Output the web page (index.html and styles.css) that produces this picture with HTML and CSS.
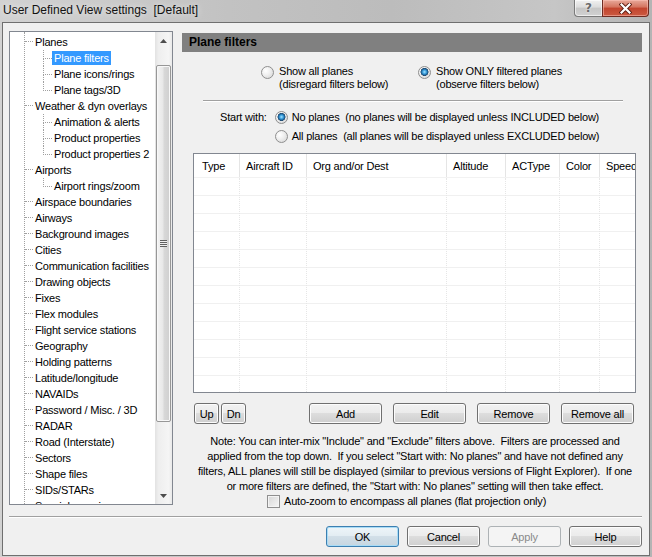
FILE: index.html
```html
<!DOCTYPE html>
<html lang="en">
  <head>
    <meta charset="UTF-8">
    <meta name="viewport" content="width=device-width, initial-scale=1.0">
    <title>User Defined View settings</title>
    <link rel="stylesheet" href="styles.css">
  </head>
  <body>
    <div class="window">
      <div class="titlebar">
        <span class="title">User Defined View settings&nbsp; [Default]</span>
        <div class="caption">
          <span class="cap cap-help">?</span>
          <span class="cap cap-close">
            <svg width="13" height="11" viewBox="0 0 13 11">
              <path d="M2.5 1.5 L10.5 9.5 M10.5 1.5 L2.5 9.5" stroke="#5a1d12" stroke-width="4" stroke-linecap="square"/>
              <path d="M2.5 1.5 L10.5 9.5 M10.5 1.5 L2.5 9.5" stroke="#ffffff" stroke-width="2.2" stroke-linecap="square"/>
            </svg>
          </span>
        </div>
      </div>

      <div class="client">
        <div class="main">
          <!-- left tree -->
          <div class="tree">
            <div class="tree-items">
              <ul class="tree-root">
                <li>
                  <div class="row"><span class="branch"></span><span class="label">Planes</span></div>
                  <ul class="tree-sub">
                    <li class="row"><span class="branch"></span><span class="label selected">Plane filters</span></li>
                    <li class="row"><span class="branch"></span><span class="label">Plane icons/rings</span></li>
                    <li class="row last"><span class="branch"></span><span class="label">Plane tags/3D</span></li>
                  </ul>
                </li>
                <li>
                  <div class="row"><span class="branch"></span><span class="label">Weather &amp; dyn overlays</span></div>
                  <ul class="tree-sub">
                    <li class="row"><span class="branch"></span><span class="label">Animation &amp; alerts</span></li>
                    <li class="row"><span class="branch"></span><span class="label">Product properties</span></li>
                    <li class="row last"><span class="branch"></span><span class="label">Product properties 2</span></li>
                  </ul>
                </li>
                <li>
                  <div class="row"><span class="branch"></span><span class="label">Airports</span></div>
                  <ul class="tree-sub">
                    <li class="row last"><span class="branch"></span><span class="label">Airport rings/zoom</span></li>
                  </ul>
                </li>
                <li class="row"><span class="branch"></span><span class="label">Airspace boundaries</span></li>
                <li class="row"><span class="branch"></span><span class="label">Airways</span></li>
                <li class="row"><span class="branch"></span><span class="label">Background images</span></li>
                <li class="row"><span class="branch"></span><span class="label">Cities</span></li>
                <li class="row"><span class="branch"></span><span class="label">Communication facilities</span></li>
                <li class="row"><span class="branch"></span><span class="label">Drawing objects</span></li>
                <li class="row"><span class="branch"></span><span class="label">Fixes</span></li>
                <li class="row"><span class="branch"></span><span class="label">Flex modules</span></li>
                <li class="row"><span class="branch"></span><span class="label">Flight service stations</span></li>
                <li class="row"><span class="branch"></span><span class="label">Geography</span></li>
                <li class="row"><span class="branch"></span><span class="label">Holding patterns</span></li>
                <li class="row"><span class="branch"></span><span class="label">Latitude/longitude</span></li>
                <li class="row"><span class="branch"></span><span class="label">NAVAIDs</span></li>
                <li class="row"><span class="branch"></span><span class="label">Password / Misc. / 3D</span></li>
                <li class="row"><span class="branch"></span><span class="label">RADAR</span></li>
                <li class="row"><span class="branch"></span><span class="label">Road (Interstate)</span></li>
                <li class="row"><span class="branch"></span><span class="label">Sectors</span></li>
                <li class="row"><span class="branch"></span><span class="label">Shape files</span></li>
                <li class="row"><span class="branch"></span><span class="label">SIDs/STARs</span></li>
                <li class="row"><span class="branch"></span><span class="label">Special use airspace</span></li>
              </ul>
            </div>
            <div class="vscroll">
              <div class="sb-btn">
                <svg width="7" height="4" viewBox="0 0 7 4"><path d="M0 4 L3.5 0 L7 4 Z" fill="#4d4d4d"/></svg>
              </div>
              <div class="sb-track">
                <div class="sb-thumb">
                  <span class="grip"></span>
                </div>
              </div>
              <div class="sb-btn">
                <svg width="7" height="4" viewBox="0 0 7 4"><path d="M0 0 L7 0 L3.5 4 Z" fill="#4d4d4d"/></svg>
              </div>
            </div>
          </div>

          <!-- right panel -->
          <div class="panel">
            <div class="panel-head">Plane filters</div>

            <div class="show-row">
              <div class="opt opt-all">
                <span class="radio"></span>
                <span>Show all planes<br>(disregard filters below)</span>
              </div>
              <div class="opt">
                <span class="radio checked"></span>
                <span>Show ONLY filtered planes<br>(observe filters below)</span>
              </div>
            </div>

            <div class="sep sep-short"></div>

            <div class="start-with">
              <span class="start-label">Start with:</span>
              <div class="opt opt-line">
                <span class="radio checked"></span>
                <span>No planes&nbsp; (no planes will be displayed unless INCLUDED below)</span>
              </div>
              <span></span>
              <div class="opt opt-line">
                <span class="radio"></span>
                <span>All planes&nbsp; (all planes will be displayed unless EXCLUDED below)</span>
              </div>
            </div>

            <div class="listview">
              <div class="lv-head">
                <span>Type</span>
                <span>Aircraft ID</span>
                <span>Org and/or Dest</span>
                <span>Altitude</span>
                <span>ACType</span>
                <span>Color</span>
                <span>Speed</span>
              </div>
              <div class="lv-body">
                <span></span><span></span><span></span><span></span><span></span><span></span><span></span>
              </div>
            </div>

            <div class="list-buttons">
              <button class="btn btn-small">Up</button>
              <button class="btn btn-small">Dn</button>
              <button class="btn btn-add">Add</button>
              <button class="btn">Edit</button>
              <button class="btn">Remove</button>
              <button class="btn">Remove all</button>
            </div>

            <p class="note">
              Note: You can inter-mix "Include" and "Exclude" filters above.&nbsp; Filters are processed and<br>
              applied from the top down.&nbsp; If you select "Start with: No planes" and have not defined any<br>
              filters, ALL planes will still be displayed (similar to previous versions of Flight Explorer).&nbsp; If one<br>
              or more filters are defined, the "Start with: No planes" setting will then take effect.
            </p>

            <label class="autozoom">
              <span class="checkbox"></span>
              <span>Auto-zoom to encompass all planes (flat projection only)</span>
            </label>
          </div>
        </div>

        <div class="sep footer-sep"></div>

        <div class="dlg-buttons">
          <button class="btn btn-default">OK</button>
          <button class="btn">Cancel</button>
          <button class="btn" disabled>Apply</button>
          <button class="btn">Help</button>
        </div>
      </div>
    </div>
  </body>
</html>
```

FILE: styles.css
```css
body{
  margin: 0;
  background: #ffffff;
  font-family: "Liberation Sans", Arial, sans-serif;
  font-size: 11px;
  letter-spacing: -0.2px;
  color: #000000;
}
.window{
  width: 652px;
  height: 557px;
  box-sizing: border-box;
  padding: 0 2px 1px 2px;
  display: flex;
  flex-direction: column;
  background: linear-gradient(to right, #d2d2d2, #c2c2c2 35%, #bcbcbc 60%, #c6c6c6 85%, #b4b4b4);
}

/* title bar */
.titlebar{
  height: 22px;
  display: flex;
  align-items: flex-start;
}
.title{
  padding: 3px 0 0 1px;
  font-size: 12px;
  line-height: 15px;
  color: #111111;
  letter-spacing: 0;
  text-shadow: 0 0 6px rgba(255, 255, 255, 0.8);
  white-space: nowrap;
}
.caption{
  margin-left: auto;
  margin-right: 1px;
  display: flex;
}
.cap{
  height: 17px;
  box-sizing: border-box;
  display: flex;
  align-items: center;
  justify-content: center;
}
.cap-help{
  width: 28px;
  border: 1px solid #7a7a7a;
  border-top: none;
  border-right: none;
  border-radius: 0 0 0 4px;
  background: linear-gradient(#f1f1f1, #dcdcdc 45%, #c6c6c6 50%, #d2d2d2);
  box-shadow: inset 0 0 0 1px rgba(255, 255, 255, 0.6);
  font-family: "DejaVu Sans", sans-serif;
  font-weight: bold;
  font-size: 12px;
  color: #6a6a6a;
  text-shadow: 0 0 2px #ffffff;
}
.cap-close{
  width: 47px;
  border: 1px solid #6e2c22;
  border-top: none;
  border-radius: 0 0 4px 0;
  background: linear-gradient(#e8a99a, #d4735e 45%, #c2442d 50%, #cb5a41);
  box-shadow: inset 0 0 0 1px rgba(255, 200, 190, 0.5);
}

/* client area */
.client{
  flex: 1;
  box-sizing: border-box;
  border: 1px solid #6f6f6f;
  background: #f0f0f0;
  padding: 8px 7px 0 6px;
  display: flex;
  flex-direction: column;
}
.main{
  height: 474px;
  display: flex;
  gap: 9px;
  align-items: flex-start;
}

/* tree */
.tree{
  width: 164px;
  height: 474px;
  box-sizing: border-box;
  border: 1px solid #828790;
  background: #ffffff;
  display: flex;
}
.tree-items{
  flex: 1;
  overflow: hidden;
}
.tree-root,
.tree-sub{
  list-style: none;
  margin: 0;
  padding: 0;
}
.tree-root{
  margin-left: 14px;
  padding-top: 2px;
  min-height: 100%;
  box-sizing: border-box;
  border-left: 1px dotted #a0a0a0;
}
.row{
  height: 16px;
  display: flex;
  white-space: nowrap;
}
.branch{
  width: 8px;
  height: 8px;
  flex: none;
  box-sizing: border-box;
  border-bottom: 1px dotted #a0a0a0;
}
.tree-sub{
  margin-left: 18px;
}
.tree-sub .branch{
  width: 9px;
  height: 16px;
  border: none;
  display: flex;
  flex-direction: column;
}
.tree-sub .branch::before{
  content: "";
  height: 9px;
  box-sizing: border-box;
  border-left: 1px dotted #a0a0a0;
  border-bottom: 1px dotted #a0a0a0;
}
.tree-sub .branch::after{
  content: "";
  flex: 1;
  border-left: 1px dotted #a0a0a0;
}
.tree-sub .last .branch::after{
  border-left: none;
}
.label{
  margin-top: 1px;
  height: 14px;
  line-height: 14px;
  padding: 0 2px;
}
.label.selected{
  background: #3399ff;
  color: #ffffff;
}

/* tree scrollbar */
.vscroll{
  width: 17px;
  display: flex;
  flex-direction: column;
  background: linear-gradient(to right, #e2e2e2, #eeeeee 20%, #f5f5f5 80%, #e9e9e9);
}
.sb-btn{
  height: 17px;
  display: flex;
  align-items: center;
  justify-content: center;
}
.sb-track{
  flex: 1;
}
.sb-thumb{
  margin: 16px 1px 0 1px;
  height: 357px;
  box-sizing: border-box;
  border: 1px solid #979797;
  border-radius: 2px;
  background: linear-gradient(to right, #f4f4f4, #e8e8e8 45%, #d8d8d8 55%, #cfcfcf);
  box-shadow: inset 0 0 0 1px #f8f8f8;
  display: flex;
  align-items: center;
  justify-content: center;
}
.grip{
  width: 7px;
  height: 7px;
  background: repeating-linear-gradient(to bottom, #606060 0 1px, #eeeeee 1px 2px);
}

/* right panel */
.panel{
  width: 460px;
  flex: none;
}
.panel-head{
  margin-top: 2px;
  height: 19px;
  line-height: 19px;
  padding-left: 7px;
  background: #808080;
  font-size: 12px;
  font-weight: bold;
  letter-spacing: 0;
  color: #000000;
}
.show-row{
  margin-top: 13px;
  padding-left: 79px;
  display: flex;
}
.opt{
  display: flex;
  align-items: flex-start;
  gap: 5px;
  line-height: 13px;
}
.opt-all{
  width: 157px;
}
.opt .radio{
  margin-top: 1px;
}
.radio{
  width: 13px;
  height: 13px;
  flex: none;
  box-sizing: border-box;
  border: 1px solid #8f8f8f;
  border-radius: 50%;
  background: radial-gradient(circle at 35% 35%, #ffffff, #f0f0f0 40%, #d2d2d2);
}
.radio.checked{
  background:
    radial-gradient(circle at 50% 45%, #a8e4ff 0, #3fa3e0 1.8px, #1d5f93 3.2px, #24486a 3.8px, transparent 4.2px),
    radial-gradient(circle at 35% 35%, #ffffff, #f0f0f0 40%, #d2d2d2);
}
.sep{
  height: 0;
  border-top: 1px solid #a0a0a0;
  border-bottom: 1px solid #ffffff;
}
.sep-short{
  margin: 9px 0 0 21px;
  width: 420px;
}
.start-with{
  margin: 6px 0 0 38px;
  display: grid;
  grid-template-columns: auto 1fr;
  column-gap: 8px;
}
.start-label{
  line-height: 19px;
}
.opt-line{
  height: 19px;
  align-items: center;
  gap: 4px;
}
.opt-line .radio{
  margin-top: 0;
}

/* list view */
.listview{
  margin: 7px 0 0 11px;
  width: 443px;
  height: 240px;
  box-sizing: border-box;
  border: 1px solid #828790;
  background: #ffffff;
  overflow: hidden;
  display: flex;
  flex-direction: column;
}
.lv-head,
.lv-body{
  display: grid;
  grid-template-columns: 46px 67px 140px 59px 54px 40px 60px;
}
.lv-head{
  height: 23px;
  border-bottom: 1px solid #f2f2f2;
}
.lv-head span{
  padding-left: 6px;
  line-height: 24px;
  border-right: 1px solid #e5e5e5;
  white-space: nowrap;
  overflow: hidden;
}
.lv-head span:first-child{
  padding-left: 8px;
}
.lv-body{
  flex: 1;
  background: repeating-linear-gradient(to bottom, transparent 0 17px, #f0f0f0 17px 18px);
}
.lv-body span{
  border-right: 1px dotted #e6e6e6;
}

/* buttons */
.btn{
  width: 73px;
  height: 21px;
  padding: 0;
  box-sizing: border-box;
  border: 1px solid #707070;
  border-radius: 3px;
  background: linear-gradient(#f2f2f2, #ebebeb 50%, #dddddd 50%, #cfcfcf);
  box-shadow: inset 0 0 0 1px #fcfcfc;
  font-family: "Liberation Sans", Arial, sans-serif;
  font-size: 11px;
  letter-spacing: -0.2px;
  color: #000000;
}
.btn:disabled{
  border-color: #adb2b5;
  background: #f4f4f4;
  box-shadow: none;
  color: #8a8a8a;
}
.btn-default{
  border-color: #3c7fb1;
  background: linear-gradient(#eef5f9, #e2ecf2 50%, #d2dfe8 50%, #c7d6e0);
  box-shadow: inset 0 0 0 1px #a9dcf6;
}
.list-buttons{
  margin: 10px 0 0 12px;
  display: flex;
  gap: 11px;
}
.btn-small{
  width: 25px;
}
.btn-small + .btn-small{
  margin-left: -9px;
}
.btn-add{
  margin-left: 52px;
}
.note{
  margin: 10px 0 0 0;
  padding: 0 5px 0 11px;
  text-align: center;
  line-height: 15px;
  white-space: nowrap;
}
.autozoom{
  margin-left: 85px;
  height: 14px;
  display: flex;
  align-items: center;
  gap: 4px;
}
.checkbox{
  width: 13px;
  height: 13px;
  box-sizing: border-box;
  border: 1px solid #8f8f8f;
  background: linear-gradient(135deg, #d6d6d6, #f6f6f6);
  box-shadow: inset 0 0 0 1px #f4f4f4;
}

/* dialog footer */
.footer-sep{
  margin-top: 11px;
}
.dlg-buttons{
  margin-top: 8px;
  display: flex;
  justify-content: flex-end;
  gap: 8px;
}
```
